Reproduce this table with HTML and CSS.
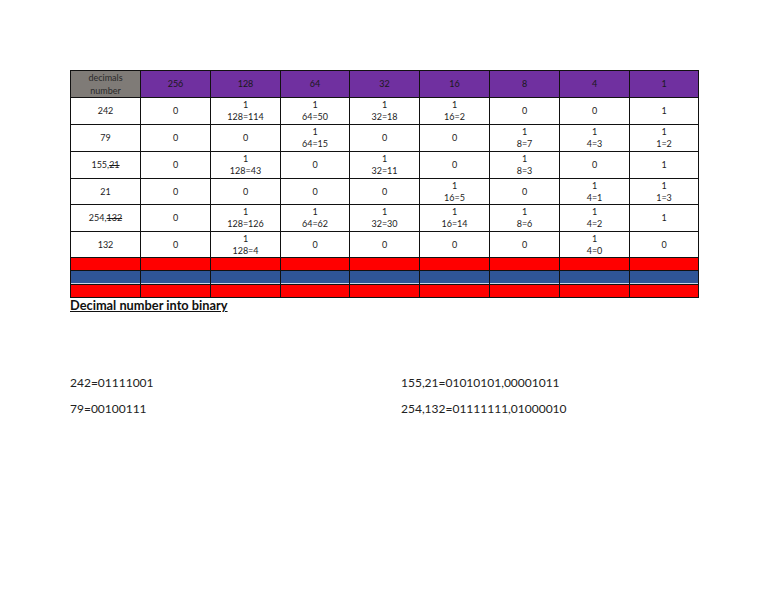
FILE: index.html
```html
<!DOCTYPE html>
<html>
<head>
<meta charset="utf-8">
<link rel="stylesheet" href="styles.css">
</head>
<body>
<div class="page">
  <table class="grid">
    <colgroup>
      <col class="c70"><col class="c70"><col class="c70"><col class="c69"><col class="c70"><col class="c70"><col class="c70"><col class="c70"><col class="c69">
    </colgroup>
    <tr class="head">
      <th class="corner">decimals<br>number</th>
      <th>256</th><th>128</th><th>64</th><th>32</th><th>16</th><th>8</th><th>4</th><th>1</th>
    </tr>
    <tr>
      <td>242</td><td>0</td><td>1<br>128=114</td><td>1<br>64=50</td><td>1<br>32=18</td><td>1<br>16=2</td><td>0</td><td>0</td><td>1</td>
    </tr>
    <tr>
      <td>79</td><td>0</td><td>0</td><td>1<br>64=15</td><td>0</td><td>0</td><td>1<br>8=7</td><td>1<br>4=3</td><td>1<br>1=2</td>
    </tr>
    <tr>
      <td>155,<s>21</s></td><td>0</td><td>1<br>128=43</td><td>0</td><td>1<br>32=11</td><td>0</td><td>1<br>8=3</td><td>0</td><td>1</td>
    </tr>
    <tr class="short">
      <td>21</td><td>0</td><td>0</td><td>0</td><td>0</td><td>1<br>16=5</td><td>0</td><td>1<br>4=1</td><td>1<br>1=3</td>
    </tr>
    <tr>
      <td>254,<s>132</s></td><td>0</td><td>1<br>128=126</td><td>1<br>64=62</td><td>1<br>32=30</td><td>1<br>16=14</td><td>1<br>8=6</td><td>1<br>4=2</td><td>1</td>
    </tr>
    <tr class="short">
      <td>132</td><td>0</td><td>1<br>128=4</td><td>0</td><td>0</td><td>0</td><td>0</td><td>1<br>4=0</td><td>0</td>
    </tr>
    <tr class="red"><td></td><td></td><td></td><td></td><td></td><td></td><td></td><td></td><td></td></tr>
    <tr class="blue"><td></td><td></td><td></td><td></td><td></td><td></td><td></td><td></td><td></td></tr>
    <tr class="red"><td></td><td></td><td></td><td></td><td></td><td></td><td></td><td></td><td></td></tr>
  </table>
  <h2 class="title">Decimal number into binary</h2>
  <div class="results">
    <div class="col">
      <p>242=01111001</p>
      <p>79=00100111</p>
    </div>
    <div class="col right">
      <p>155,21=01010101,00001011</p>
      <p>254,132=01111111,01000010</p>
    </div>
  </div>
</div>
</body>
</html>
```
FILE: styles.css
```css
html, body {
  margin: 0;
  padding: 0;
  background: #fff;
}
body {
  font-family: Lato, "Liberation Sans", sans-serif;
  color: #222;
}
.page {
  padding: 70px 0 0 70px;
}
.grid {
  border-collapse: collapse;
  table-layout: fixed;
  width: 629px;
}
.c70 { width: 70px; }
.c69 { width: 69px; }
.grid th, .grid td {
  border: 1px solid #111;
  text-align: center;
  vertical-align: middle;
  font-size: 9px;
  line-height: 12px;
  padding: 0;
  font-weight: normal;
  color: #1c1c1c;
}
.grid tr { height: 27px; }
.grid tr.short { height: 26px; }
.grid tr.head { height: 25px; }
.head th {
  background: #7030a0;
  color: #1a1a1a;
}
.head th.corner {
  background: #7f7b77;
  color: #2a2a2a;
  line-height: 13px;
}
.grid td s {
  text-decoration-thickness: 1px;
}
.grid tr.red { height: 13px; }
.grid tr.red td { background: #ff0000; }
.grid tr.blue { height: 14px; }
.grid tr.blue td {
  background: #2f5597;
  box-shadow: inset 0 -1px 0 #c9d4e8;
}
.title {
  margin: 0;
  font-size: 12.8px;
  line-height: 14px;
  font-weight: bold;
  text-decoration: underline;
  color: #111;
}
.results {
  display: flex;
  margin-top: 63px;
}
.col {
  width: 331px;
}
.col p {
  margin: 0 0 11px 0;
  font-size: 12px;
  line-height: 15px;
  color: #222;
}
```
